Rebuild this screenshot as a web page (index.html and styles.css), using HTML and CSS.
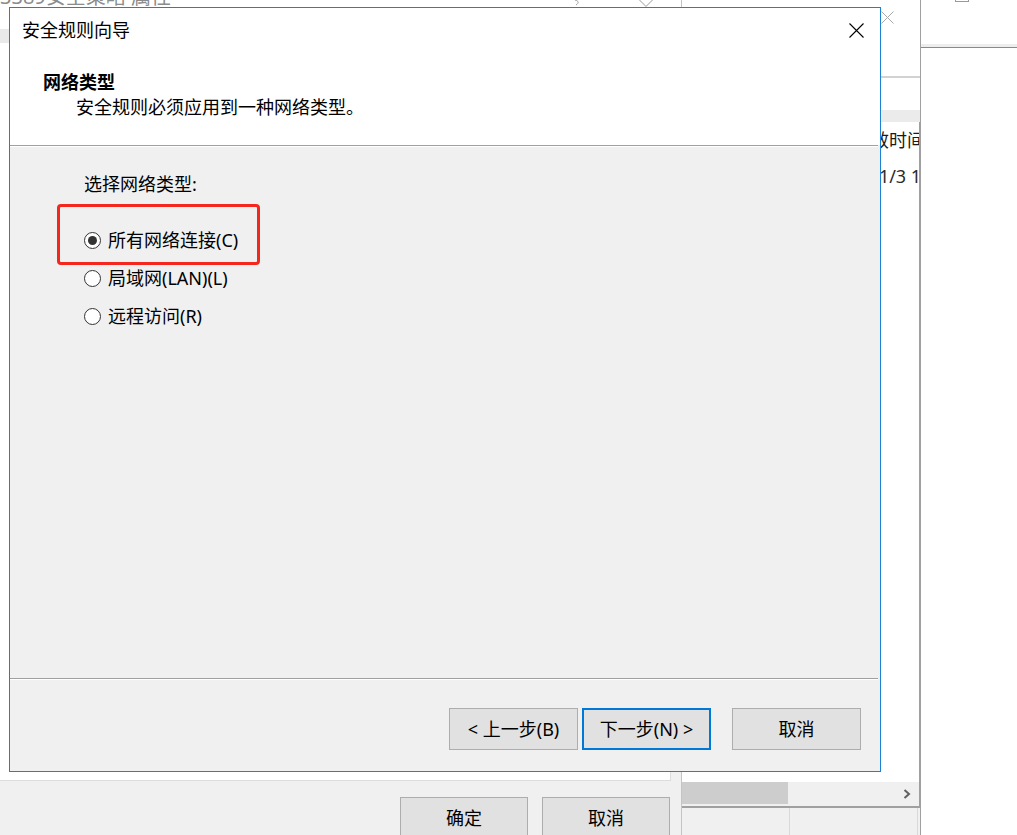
FILE: index.html
```html
<!DOCTYPE html>
<html lang="zh-CN">
<head>
<meta charset="utf-8">
<title>安全规则向导</title>
<link rel="stylesheet" href="styles.css">
</head>
<body>
<div class="desktop">

  <div class="win-left">
    <div class="lw-title">
      <span class="lw-title-text">3389安全策略 属性</span>
      <div class="lw-icons">
        <svg class="lw-help" width="8" height="6" viewBox="0 0 8 6"><path d="M1 0 C5 1 5 3 2 5" fill="none" stroke="#9a9a9a" stroke-width="1"/></svg>
        <svg class="lw-chev" width="14" height="8" viewBox="0 0 14 8"><path d="M0.5 0 L7 6.5 L13.5 0" fill="none" stroke="#9a9a9a" stroke-width="1"/></svg>
      </div>
    </div>
    <div class="lw-tabs"></div>
    <div class="lw-page"></div>
    <div class="lw-footer">
      <button class="btn">确定</button>
      <button class="btn">取消</button>
    </div>
  </div>

  <div class="win-right">
    <div class="rw-title">
      <svg width="13" height="13" viewBox="0 0 13 13"><path d="M0.5 0.5 L12.5 12.5 M12.5 0.5 L0.5 12.5" stroke="#a8a8a8" stroke-width="1"/></svg>
    </div>
    <div class="rw-sep"></div>
    <div class="rw-gap"></div>
    <div class="rw-tool"></div>
    <div class="rw-list">
      <div class="rw-head">生效时间</div>
      <div class="rw-row">2021/1/3 14:20</div>
      <div class="rw-fill"></div>
      <div class="rw-scroll">
        <div class="rw-thumb"></div>
        <svg class="rw-arrow" width="8" height="10" viewBox="0 0 8 10"><path d="M1.5 1 L6 5 L1.5 9" fill="none" stroke="#606060" stroke-width="2"/></svg>
      </div>
    </div>
    <div class="rw-status">
      <div class="rw-cell c1"></div>
      <div class="rw-cell c2"></div>
    </div>
  </div>

  <div class="win-far">
    <div class="wf-top"><span class="wf-square"></span></div>
    <div class="wf-band"></div>
    <div class="wf-line"></div>
  </div>

  <div class="wizard">
    <div class="wz-top">
      <div class="wz-titlebar">
        <span class="wz-title">安全规则向导</span>
        <svg class="wz-close" width="15" height="15" viewBox="0 0 15 15"><path d="M0.5 0.5 L14.5 14.5 M14.5 0.5 L0.5 14.5" stroke="#000" stroke-width="1.1"/></svg>
      </div>
      <div class="wz-header">
        <div class="wz-heading">网络类型</div>
        <div class="wz-sub">安全规则必须应用到一种网络类型。</div>
      </div>
    </div>
    <div class="etched"></div>
    <div class="wz-body">
      <div class="wz-prompt">选择网络类型:</div>
      <div class="radio-list">
        <div class="radio checked"><span class="radio-mark"></span><span>所有网络连接(C)</span></div>
        <div class="radio"><span class="radio-mark"></span><span>局域网(LAN)(L)</span></div>
        <div class="radio"><span class="radio-mark"></span><span>远程访问(R)</span></div>
      </div>
      <div class="highlight"></div>
    </div>
    <div class="etched"></div>
    <div class="wz-footer">
      <button class="btn">&lt; 上一步(B)</button>
      <button class="btn btn-default">下一步(N) &gt;</button>
      <button class="btn btn-cancel">取消</button>
    </div>
  </div>

</div>
</body>
</html>
```

FILE: styles.css
```css
* { box-sizing: border-box; }
html, body { margin: 0; padding: 0; }
body {
  font-family: "Noto Sans", "Noto Sans CJK SC", sans-serif;
  font-size: 18px;
  color: #000;
  background: #fff;
}
.desktop {
  position: relative;
  width: 1017px;
  height: 835px;
  overflow: hidden;
  background: #fff;
}

/* ---------- buttons ---------- */
.btn {
  font-family: inherit;
  font-size: 18px;
  line-height: 22px;
  color: #000;
  width: 129px;
  height: 42px;
  padding: 0;
  background: #e1e1e1;
  border: 1px solid #adadad;
  border-radius: 0;
  white-space: nowrap;
}
.btn-default { border: 2px solid #0078d7; }

/* ---------- left background window ---------- */
.win-left {
  position: absolute;
  left: 0;
  top: 0;
  width: 681px;
  height: 835px;
  background: #f0f0f0;
  display: flex;
  flex-direction: column;
}
.lw-title {
  height: 29px;
  background: #fff;
  display: flex;
  align-items: flex-start;
  overflow: hidden;
}
.lw-title-text {
  margin-top: -15px;
  font-size: 20px;
  line-height: 24px;
  color: #8c8c8c;
  white-space: nowrap;
}
.lw-icons {
  margin-left: auto;
  padding-right: 28px;
  display: flex;
  align-items: flex-start;
  gap: 57px;
}
.lw-tabs { height: 14px; background: #e9e9e9; }
.lw-page {
  flex: 1;
  background: #fff;
  margin-right: 10px;
  border-right: 1px solid #dcdcdc;
  border-bottom: 1px solid #dcdcdc;
}
.lw-footer {
  height: 54px;
  display: flex;
  justify-content: flex-end;
  align-items: flex-start;
  gap: 14px;
  padding: 16px 11px 0 0;
  overflow: hidden;
}
.lw-footer .btn { width: 128px; height: 42px; flex-shrink: 0; }

/* ---------- right background window ---------- */
.win-right {
  position: absolute;
  left: 681px;
  top: 0;
  width: 240px;
  height: 835px;
  background: #fff;
  border-left: 1px solid #c4c4c4;
  border-right: 1px solid #a0a0a0;
  display: flex;
  flex-direction: column;
}
.rw-title {
  height: 76px;
  display: flex;
  justify-content: flex-end;
  align-items: flex-start;
  padding: 11px 26px 0 0;
}
.rw-sep { height: 2px; background: #d2d2d2; }
.rw-gap { height: 32px; }
.rw-tool { height: 12px; background: #ebebeb; }
.rw-list {
  flex: 1;
  display: flex;
  flex-direction: column;
  border-right: 1px solid #a0a0a0;
  border-bottom: 2px solid #a0a0a0;
  overflow: hidden;
}
.rw-head, .rw-row {
  height: 36px;
  line-height: 36px;
  font-size: 18px;
  white-space: nowrap;
  color: #1a1a1a;
}
.rw-head { padding-left: 171px; }
.rw-row { padding-left: 149px; color: #2a2a2a; }
.rw-fill { flex: 1; }
.rw-scroll {
  height: 24px;
  background: #f0f0f0;
  display: flex;
  align-items: flex-start;
}
.rw-thumb { width: 106px; height: 22px; background: #cdcdcd; }
.rw-arrow { margin: 7px 8px 0 auto; }
.rw-status {
  height: 27px;
  background: #f0f0f0;
  display: flex;
}
.rw-cell { height: 100%; border-right: 1px solid #d9d9d9; }
.rw-cell.c1 { width: 108px; }
.rw-cell.c2 { width: 128px; }

/* ---------- far right window ---------- */
.win-far {
  position: absolute;
  left: 921px;
  top: 0;
  width: 96px;
  height: 835px;
  background: #fff;
  display: flex;
  flex-direction: column;
}
.wf-top {
  height: 44px;
  display: flex;
  align-items: flex-start;
}
.wf-square {
  display: block;
  width: 14px;
  height: 14px;
  margin: -12px 0 0 34px;
  border: 1px solid #999;
}
.wf-band { height: 3px; background: #ededed; }
.wf-line { height: 1px; background: #8a8a8a; }

/* ---------- wizard dialog ---------- */
.wizard {
  position: absolute;
  left: 9px;
  top: 7px;
  width: 872px;
  height: 765px;
  border: 1px solid #1a82d6;
  background: #f0f0f0;
  display: flex;
  flex-direction: column;
}
.wz-top {
  height: 137px;
  background: #fff;
  display: flex;
  flex-direction: column;
}
.wz-titlebar {
  height: 47px;
  display: flex;
  align-items: center;
  padding: 0 16px 0 12px;
}
.wz-title { font-size: 18px; line-height: 22px; margin-top: -3px; }
.wz-close { margin-left: auto; margin-top: -2px; }
.wz-header { padding: 16px 0 0 33px; }
.wz-heading { font-weight: bold; line-height: 22px; }
.wz-sub { margin: 3px 0 0 33px; line-height: 22px; }

.etched {
  height: 2px;
  margin-right: 2px;
  border-top: 1px solid #a0a0a0;
  border-bottom: 1px solid #fff;
}

.wz-body {
  position: relative;
  height: 531px;
  padding: 26px 0 0 74px;
}
.wz-prompt { line-height: 22px; }
.radio-list {
  margin-top: 26px;
  display: flex;
  flex-direction: column;
}
.radio {
  height: 38px;
  display: flex;
  align-items: center;
  gap: 7px;
  line-height: 22px;
}
.radio-mark {
  width: 17px;
  height: 17px;
  border: 1px solid #333;
  border-radius: 50%;
  background: #fff;
  display: flex;
  align-items: center;
  justify-content: center;
}
.radio.checked .radio-mark::after {
  content: "";
  width: 9px;
  height: 9px;
  border-radius: 50%;
  background: #333;
}
.highlight {
  position: absolute;
  left: 47px;
  top: 57px;
  width: 203px;
  height: 61px;
  border: 3px solid #f5261d;
  border-radius: 4px;
}

.wz-footer {
  flex: 1;
  display: flex;
  justify-content: flex-end;
  align-items: flex-start;
  padding: 28px 19px 0 0;
}
.wz-footer .btn-default { margin-left: 4px; }
.wz-footer .btn-cancel { margin-left: 21px; }
```
